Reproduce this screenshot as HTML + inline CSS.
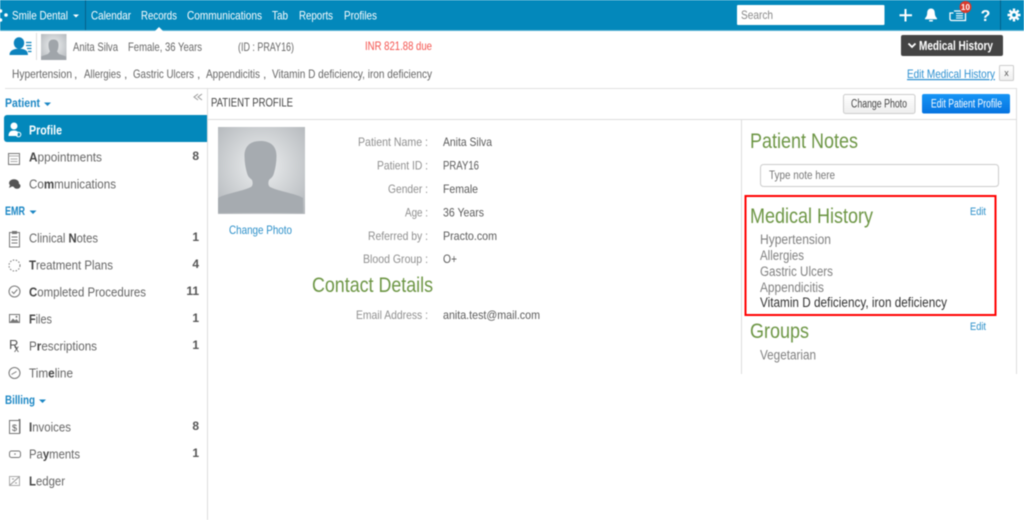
<!DOCTYPE html>
<html><head><meta charset="utf-8"><title>Patient Profile</title>
<style>
html,body{margin:0;padding:0;background:#fff;width:1024px;height:520px;overflow:hidden}
svg{display:block;filter:blur(.4px)}
text{font-family:"Liberation Sans",sans-serif;font-size:12px;fill:#666}
.nav{fill:#fff;font-size:12px}
.s{font-size:12.5px;fill:#666}
.s tspan{fill:#444;font-weight:bold}
.h{font-size:21px;fill:#6d9645}
.l{fill:#8f8f8f;text-anchor:end}
.v{fill:#5a5a5a}
.b{fill:#1a86c4;font-weight:bold;font-size:11.5px}
.c{fill:#555;font-weight:bold;text-anchor:end}
.r{font-size:13.5px;fill:#808080}
.e{fill:#2b8fc9;font-size:11px}
.i{fill:none;stroke:#777;stroke-width:1}
</style></head><body>
<svg width="1024" height="520" viewBox="0 0 1024 520" xmlns="http://www.w3.org/2000/svg">
<defs>
<radialGradient id="av" cx=".5" cy=".45" r=".7"><stop offset="0" stop-color="#eef0f1"/><stop offset="1" stop-color="#b4b8bc"/></radialGradient>
<linearGradient id="bl" x1="0" y1="0" x2="0" y2="1"><stop offset="0" stop-color="#1795f5"/><stop offset="1" stop-color="#0573e0"/></linearGradient>
<linearGradient id="gr" x1="0" y1="0" x2="0" y2="1"><stop offset="0" stop-color="#fff"/><stop offset="1" stop-color="#eee"/></linearGradient>
</defs>

<!-- top nav -->
<rect width="1024" height="30" fill="#0388bb"/>
<rect y="30" width="1024" height="1" fill="#5db4d6"/>
<rect x="85" width="1" height="30" fill="#05618a"/>
<rect x="1000" width="1" height="30" fill="#05618a"/>
<circle cx="6" cy="15" r="1.8" fill="#fff"/><circle cx="0.5" cy="11" r="1.8" fill="#fff"/><circle cx="0.5" cy="20" r="1.8" fill="#fff"/>
<text class="nav" x="12" y="19.5" textLength="56" lengthAdjust="spacingAndGlyphs">Smile Dental</text>
<path d="M73 14.500h6l-3 3z" fill="#fff"/>
<text class="nav" x="91" y="19.5" textLength="40" lengthAdjust="spacingAndGlyphs">Calendar</text>
<text class="nav" x="141" y="19.5" textLength="36" lengthAdjust="spacingAndGlyphs">Records</text>
<text class="nav" x="187" y="19.5" textLength="75" lengthAdjust="spacingAndGlyphs">Communications</text>
<text class="nav" x="272" y="19.5" textLength="16" lengthAdjust="spacingAndGlyphs">Tab</text>
<text class="nav" x="299" y="19.5" textLength="34" lengthAdjust="spacingAndGlyphs">Reports</text>
<text class="nav" x="344" y="19.5" textLength="33" lengthAdjust="spacingAndGlyphs">Profiles</text>
<path d="M155 31l4-4 4 4z" fill="#fff"/>
<rect x="737" y="5" width="147.500" height="20" rx="1" fill="#fff"/>
<text x="741" y="19" textLength="32" lengthAdjust="spacingAndGlyphs" style="fill:#888">Search</text>
<path d="M905.500 9v12.500M899.500 15.300h12.500" stroke="#fff" stroke-width="2" fill="none"/>
<path d="M931 8.500c-2.600 0-3.800 2-3.800 4.500 0 2.500-1 4-2.200 5.300v1h12v-1c-1.200-1.300-2.200-2.800-2.200-5.300 0-2.500-1.200-4.500-3.800-4.500z" fill="#fff"/><rect x="929" y="20" width="4" height="1.500" rx=".7" fill="#fff"/>
<path d="M954 11h11.500v9.500H951.500a1.500 1.500 0 0 1-1.500-1.500v-6h3.500" fill="none" stroke="#fff" stroke-width="1.300"/><path d="M956 13.500h7M956 15.800h7M956 18h7" stroke="#fff" stroke-width="1.100"/>
<circle cx="965.500" cy="7" r="6" fill="#d9392b"/>
<text x="965.500" y="10" text-anchor="middle" style="fill:#fff;font-size:8px;font-weight:bold">10</text>
<text x="985.500" y="21" text-anchor="middle" style="fill:#fff;font-size:16px;font-weight:bold">?</text>
<g fill="#fff"><circle cx="1014" cy="15" r="4.200"/><g stroke="#fff" stroke-width="2.400"><path d="M1014 8.500v13M1007.500 15h13M1009.400 10.400l9.200 9.200M1018.600 10.400l-9.200 9.200"/></g></g><circle cx="1014" cy="15" r="1.800" fill="#0388bb"/>

<!-- patient strip -->
<ellipse cx="19" cy="43" rx="5.200" ry="5.800" fill="#0d83bd"/>
<path d="M9.500 55c0-3.500 2-5 6-6l3.500-.5 3.500.5c3 .7 4.500 2 5 3.500l.5 2.500z" fill="#0d83bd"/>
<path d="M26 42.500h5.500M26 45.500h5.500M27 48.500h4.500M28 51.500h3.500" stroke="#0d83bd" stroke-width="1.300"/>
<rect x="36" y="33" width="1" height="27" fill="#ddd"/>
<rect x="41" y="34" width="25.500" height="26" fill="url(#av)"/>
<path d="M41 60v-3.500l7-2.500 2-2.500c-1-2-1.500-4-1.500-6.500 0-3.500 1.500-5.500 5-5.500s5 2 5 5.500c0 2.500-.5 4.500-1.500 6.500l2 2.500 7 2.500V60z" fill="#a0a5aa"/>
<text x="73" y="51" textLength="45" lengthAdjust="spacingAndGlyphs">Anita Silva</text>
<text x="128" y="51" textLength="74" lengthAdjust="spacingAndGlyphs">Female, 36 Years</text>
<text x="238" y="51" textLength="56" lengthAdjust="spacingAndGlyphs">(ID : PRAY16)</text>
<text x="365" y="50" textLength="67" lengthAdjust="spacingAndGlyphs" style="fill:#f4524d">INR 821.88 due</text>
<rect x="901" y="35" width="102" height="21" rx="2" fill="#444"/>
<path d="M908.500 43.500l3.500 3.500 3.500-3.500" fill="none" stroke="#fff" stroke-width="1.800"/>
<text x="919" y="50" textLength="74" lengthAdjust="spacingAndGlyphs" style="fill:#fff;font-weight:bold;font-size:12.5px">Medical History</text>
<text x="12" y="78" textLength="60" lengthAdjust="spacingAndGlyphs">Hypertension</text><text x="74" y="78">,</text>
<text x="84" y="78" textLength="37" lengthAdjust="spacingAndGlyphs">Allergies</text><text x="124" y="78">,</text>
<text x="133" y="78" textLength="61" lengthAdjust="spacingAndGlyphs">Gastric Ulcers</text><text x="197" y="78">,</text>
<text x="206" y="78" textLength="54" lengthAdjust="spacingAndGlyphs">Appendicitis</text><text x="263" y="78">,</text>
<text x="272" y="78" textLength="160" lengthAdjust="spacingAndGlyphs">Vitamin D deficiency, iron deficiency</text>
<text x="907" y="78" textLength="88" lengthAdjust="spacingAndGlyphs" text-decoration="underline" style="fill:#2b8fd0">Edit Medical History</text>
<rect x="999.500" y="65.500" width="14" height="15" rx="1" fill="url(#gr)" stroke="#ccc"/>
<text x="1006.500" y="76" text-anchor="middle" style="font-size:9px;fill:#555">x</text>

<!-- frame lines -->
<rect x="5" y="88" width="1012" height="1" fill="#e0e0e0"/>
<rect x="207" y="88" width="1" height="432" fill="#ddd"/>
<rect x="208" y="119" width="808" height="1" fill="#ddd"/>
<rect x="741" y="119" width="1" height="255" fill="#ddd"/>
<rect x="1016" y="88" width="1" height="286" fill="#ddd"/>

<!-- panel header -->
<text x="211" y="106.500" textLength="82" lengthAdjust="spacingAndGlyphs" style="fill:#444">PATIENT PROFILE</text>
<rect x="843.500" y="94.500" width="71.500" height="19" rx="2" fill="url(#gr)" stroke="#ccc"/>
<text x="851" y="107.500" textLength="56" lengthAdjust="spacingAndGlyphs" style="font-size:11.5px;fill:#444">Change Photo</text>
<rect x="922" y="94" width="88" height="19.500" rx="2" fill="url(#bl)"/>
<text x="931" y="107.500" textLength="71" lengthAdjust="spacingAndGlyphs" style="font-size:11.5px;fill:#fff">Edit Patient Profile</text>

<!-- sidebar -->
<text class="b" x="5" y="107" textLength="35" lengthAdjust="spacingAndGlyphs">Patient</text><path d="M44 102.500h7l-3.500 3.500z" fill="#1a86c4"/>
<path d="M198 94l-4 3 4 3M202 94l-4 3 4 3" fill="none" stroke="#999"/>
<path d="M7 115h200v27H7a3 3 0 0 1-3-3v-21a3 3 0 0 1 3-3z" fill="#0388bb"/>
<text x="29" y="134.500" textLength="33" lengthAdjust="spacingAndGlyphs" style="fill:#fff;font-weight:bold;font-size:12.5px">Profile</text>
<circle cx="14" cy="126" r="3.500" fill="#fff"/><path d="M8.500 136c0-4 2-5.500 5.500-5.500 2 0 3 .5 4 1.500l-.5 4z" fill="#fff"/><circle cx="18.500" cy="134.500" r="2.300" fill="none" stroke="#fff"/>

<rect class="i" x="8.500" y="153.500" width="11" height="11"/><path d="M8.500 156h11M10.500 159h7M10.500 161.500h7" stroke="#aaa" fill="none"/>
<text class="s" x="29" y="161.500" textLength="73" lengthAdjust="spacingAndGlyphs"><tspan>A</tspan>ppointments</text><text class="c" x="199" y="160">8</text>
<ellipse cx="14" cy="183" rx="5" ry="3.700" fill="#555"/><ellipse cx="17" cy="186" rx="3.500" ry="2.800" fill="#555"/><path d="M10 185l-1 3 3-1.500z" fill="#555"/>
<text class="s" x="29" y="188.500" textLength="87" lengthAdjust="spacingAndGlyphs">Co<tspan>m</tspan>munications</text>

<text class="b" x="5" y="215" textLength="20" lengthAdjust="spacingAndGlyphs">EMR</text><path d="M29.500 210.500h7l-3.500 3.500z" fill="#1a86c4"/>
<rect class="i" x="9.500" y="232.500" width="10" height="14.500"/><rect x="12" y="231" width="5" height="3" fill="#777"/><path d="M11.500 237h6M11.500 240h6M11.500 243h6" stroke="#777" fill="none"/>
<text class="s" x="29" y="242.500" textLength="69" lengthAdjust="spacingAndGlyphs">Clinical <tspan>N</tspan>otes</text><text class="c" x="199" y="241">1</text>
<circle cx="14.500" cy="265.500" r="5.500" fill="none" stroke="#777" stroke-dasharray="1.500 1.500"/>
<text class="s" x="29" y="269.500" textLength="84" lengthAdjust="spacingAndGlyphs"><tspan>T</tspan>reatment Plans</text><text class="c" x="199" y="268">4</text>
<circle cx="14.500" cy="291.500" r="5.500" class="i"/><path d="M11.800 291.500l2 2 3.500-4" class="i"/>
<text class="s" x="29" y="296.500" textLength="117" lengthAdjust="spacingAndGlyphs"><tspan>C</tspan>ompleted Procedures</text><text class="c" x="199" y="295">11</text>
<rect class="i" x="9.500" y="314.500" width="10" height="8"/><path d="M10 322l3-3.500 2 2 1.500-1.500 2.500 3z" fill="#777"/><circle cx="16.500" cy="316.800" r="1" fill="#777"/>
<text class="s" x="29" y="323.500" textLength="23" lengthAdjust="spacingAndGlyphs"><tspan>F</tspan>iles</text><text class="c" x="199" y="322">1</text>
<text x="9" y="349" style="font-size:13px;fill:#555">R</text><text x="14" y="352" style="font-size:10px;fill:#555">x</text>
<text class="s" x="29" y="350.500" textLength="68" lengthAdjust="spacingAndGlyphs">P<tspan>r</tspan>escriptions</text><text class="c" x="199" y="349">1</text>
<circle cx="14.500" cy="373" r="5.500" class="i"/><path d="M11.500 374.500l5-3" class="i"/>
<text class="s" x="29" y="377.500" textLength="44" lengthAdjust="spacingAndGlyphs">Tim<tspan>e</tspan>line</text>

<text class="b" x="5" y="404" textLength="30" lengthAdjust="spacingAndGlyphs">Billing</text><path d="M39 399.500h7l-3.500 3.500z" fill="#1a86c4"/>
<rect class="i" x="9.500" y="420.500" width="10" height="13"/><path d="M18.500 419.500h1.500v14" class="i"/><text x="12" y="431" style="font-size:9px;fill:#555">$</text>
<text class="s" x="29" y="431.500" textLength="42" lengthAdjust="spacingAndGlyphs"><tspan>I</tspan>nvoices</text><text class="c" x="199" y="430">8</text>
<rect class="i" x="9.500" y="451" width="11" height="6.500" rx="2"/><circle cx="15" cy="454" r=".8" fill="#777"/>
<text class="s" x="29" y="458.500" textLength="51" lengthAdjust="spacingAndGlyphs">Pa<tspan>y</tspan>ments</text><text class="c" x="199" y="457">1</text>
<rect x="9.500" y="476.500" width="10" height="9" fill="none" stroke="#aaa"/><path d="M10 485l9-8M12 479h2M15 483h2" stroke="#999" fill="none"/>
<text class="s" x="29" y="485.500" textLength="36" lengthAdjust="spacingAndGlyphs"><tspan>L</tspan>edger</text>

<!-- profile -->
<rect x="218" y="127" width="87" height="87" fill="url(#av)"/>
<path d="M218 213v-15c3-2 8-3.500 14-5 7-2 14-3.500 19-6 2-1.500 2-4 1-7-2-2-4-3-5-7-1.500-5-2.500-11-2.500-17 0-10 6-15 16-15s16 5 16 15c0 6-1 12-2.500 17-1 4-3 5-5 7-1 3-1 5.500 1 7 5 2.500 12 4 19 6 6 1.500 11 3 14 5v15z" fill="#a6abb0"/>
<text x="229" y="234" textLength="63" lengthAdjust="spacingAndGlyphs" style="fill:#2b8fc9">Change Photo</text>

<text class="l" x="428" y="146" textLength="70" lengthAdjust="spacingAndGlyphs">Patient Name :</text><text class="v" x="443" y="146" textLength="49" lengthAdjust="spacingAndGlyphs">Anita Silva</text>
<text class="l" x="428" y="169.500" textLength="51" lengthAdjust="spacingAndGlyphs">Patient ID :</text><text class="v" x="443" y="169.500" textLength="36" lengthAdjust="spacingAndGlyphs">PRAY16</text>
<text class="l" x="428" y="193" textLength="40" lengthAdjust="spacingAndGlyphs">Gender :</text><text class="v" x="443" y="193" textLength="35" lengthAdjust="spacingAndGlyphs">Female</text>
<text class="l" x="428" y="216.500" textLength="23" lengthAdjust="spacingAndGlyphs">Age :</text><text class="v" x="443" y="216.500" textLength="41" lengthAdjust="spacingAndGlyphs">36 Years</text>
<text class="l" x="428" y="240" textLength="60" lengthAdjust="spacingAndGlyphs">Referred by :</text><text class="v" x="443" y="240" textLength="54" lengthAdjust="spacingAndGlyphs">Practo.com</text>
<text class="l" x="428" y="263" textLength="65" lengthAdjust="spacingAndGlyphs">Blood Group :</text><text class="v" x="443" y="263" textLength="14" lengthAdjust="spacingAndGlyphs">O+</text>
<text class="h" x="312" y="292" textLength="121" lengthAdjust="spacingAndGlyphs">Contact Details</text>
<text class="l" x="428" y="319" textLength="72" lengthAdjust="spacingAndGlyphs">Email Address :</text><text class="v" x="443" y="319" textLength="97" lengthAdjust="spacingAndGlyphs">anita.test@mail.com</text>

<!-- right column -->
<text class="h" x="750" y="148" textLength="108" lengthAdjust="spacingAndGlyphs">Patient Notes</text>
<rect x="760.500" y="164.500" width="238" height="22" rx="3" fill="#fff" stroke="#ccc"/>
<text x="769" y="179" textLength="66" lengthAdjust="spacingAndGlyphs" style="fill:#777">Type note here</text>
<rect x="745.500" y="196" width="250" height="119" fill="none" stroke="#f00" stroke-width="2"/>
<text class="h" x="750" y="223" textLength="123" lengthAdjust="spacingAndGlyphs">Medical History</text>
<text class="e" x="970" y="215" textLength="16" lengthAdjust="spacingAndGlyphs">Edit</text>
<text class="r" x="760" y="244" textLength="71" lengthAdjust="spacingAndGlyphs">Hypertension</text>
<text class="r" x="760" y="260" textLength="44" lengthAdjust="spacingAndGlyphs">Allergies</text>
<text class="r" x="760" y="276" textLength="73" lengthAdjust="spacingAndGlyphs">Gastric Ulcers</text>
<text class="r" x="760" y="292" textLength="64" lengthAdjust="spacingAndGlyphs">Appendicitis</text>
<text class="r" x="760" y="307" textLength="187" lengthAdjust="spacingAndGlyphs" style="fill:#333">Vitamin D deficiency, iron deficiency</text>
<text class="h" x="750" y="338" textLength="59" lengthAdjust="spacingAndGlyphs">Groups</text>
<text class="e" x="970" y="330" textLength="16" lengthAdjust="spacingAndGlyphs">Edit</text>
<text class="r" x="760" y="359.500" textLength="56" lengthAdjust="spacingAndGlyphs">Vegetarian</text>
</svg>
</body></html>
